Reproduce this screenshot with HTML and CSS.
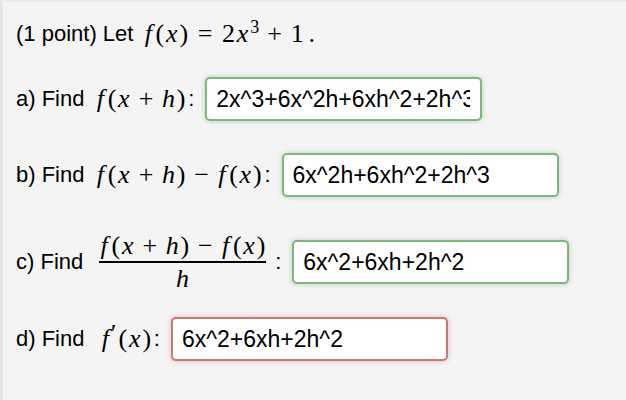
FILE: index.html
```html
<!DOCTYPE html>
<html>
<head>
<meta charset="utf-8">
<link rel="stylesheet" href="styles.css">
</head>
<body>
<div class="page">
  <div class="row r0">
    <span class="label">(1 point) Let</span>
    <span class="math m0"><i class="f">f</i><span class="p">(</span><i class="x">x</i><span class="p">)</span><span class="rel">=</span><span class="n">2</span><i class="x">x</i><sup class="sup">3</sup><span class="bin">+</span><span class="n">1</span><span class="dot">.</span></span>
  </div>
  <div class="row r1">
    <span class="label">a) Find</span>
    <span class="math mi"><i class="f">f</i><span class="p">(</span><i class="x">x</i><span class="bin">+</span><i class="h">h</i><span class="p">)</span></span><span class="colon">:</span>
    <input class="ans ok" type="text" value="2x^3+6x^2h+6xh^2+2h^3" readonly>
  </div>
  <div class="row r2">
    <span class="label">b) Find</span>
    <span class="math mi"><i class="f">f</i><span class="p">(</span><i class="x">x</i><span class="bin">+</span><i class="h">h</i><span class="p">)</span><span class="bin">−</span><i class="f">f</i><span class="p">(</span><i class="x">x</i><span class="p">)</span></span><span class="colon">:</span>
    <input class="ans ok" type="text" value="6x^2h+6xh^2+2h^3" readonly>
  </div>
  <div class="row r3">
    <span class="label">c) Find</span>
    <span class="math frac">
      <span class="num"><i class="f">f</i><span class="p">(</span><i class="x">x</i><span class="bin">+</span><i class="h">h</i><span class="p">)</span><span class="bin">−</span><i class="f">f</i><span class="p">(</span><i class="x">x</i><span class="p">)</span></span>
      <span class="den"><i class="h">h</i></span>
    </span><span class="colon">:</span>
    <input class="ans ok" type="text" value="6x^2+6xh+2h^2" readonly>
  </div>
  <div class="row r4">
    <span class="label">d) Find</span>
    <span class="math md"><i class="f">f</i><span class="prime">′</span><span class="p">(</span><i class="x">x</i><span class="p">)</span></span><span class="colon">:</span>
    <input class="ans bad" type="text" value="6x^2+6xh+2h^2" readonly>
  </div>
</div>
</body>
</html>
```

FILE: styles.css
```css
html, body {
  margin: 0;
  padding: 0;
}
body {
  background: #f4f4f4;
  font-family: "Liberation Sans", Arial, Helvetica, sans-serif;
  font-size: 22px;
  color: #000;
}
.page {
  height: 400px;
  box-sizing: border-box;
  border-left: 3px solid #e6e6e6;
  border-top: 2px solid #ebebeb;
  padding-left: 13px;
}
.row {
  display: flex;
  align-items: center;
}
.r0 { height: 64px; }
.r1 { height: 66px; }
.r2 { height: 86px; }
.r3 { height: 88px; }
.r4 { height: 66px; }

.label {
  white-space: pre;
}
.math {
  font-family: "Liberation Serif", "Times New Roman", serif;
  font-size: 26px;
  white-space: nowrap;
  line-height: 1.1;
}
.m0 { margin-left: 10px; }
.mi { margin-left: 11px; }
.md { margin-left: 16px; }
.math i {
  font-style: italic;
}
.f {
  padding-left: 0.05em;
  padding-right: 0.11em;
}
.x {
  padding: 0 0.04em;
}
.h {
  padding: 0 0.04em 0 0.02em;
}
.p {
  padding: 0 0.03em;
}
.bin {
  display: inline-block;
  margin: 0 0.31em;
}
.rel {
  display: inline-block;
  margin: 0 0.34em;
}
.n {
  padding: 0 0.03em;
}
.sup {
  font-size: 18px;
  vertical-align: 0;
  position: relative;
  top: -0.48em;
  padding-left: 1px;
}
.dot {
  padding-left: 0.15em;
}
.prime {
  font-size: 26px;
  position: relative;
  top: -0.18em;
  margin-left: -0.04em;
  padding-right: 0.05em;
}
.colon {
  margin-left: 2px;
}
.frac {
  display: inline-flex;
  flex-direction: column;
  align-items: center;
  margin-left: 16px;
}
.num {
  padding: 0 0 1px 0;
  border-bottom: 2px solid #000;
  height: 33px;
  box-sizing: border-box;
  display: flex;
  align-items: flex-end;
  line-height: 28px;
}
.den {
  height: 31px;
  line-height: 32px;
}
.frac + .colon {
  margin-left: 9px;
}
.ans {
  margin-left: 11px;
  width: 277px;
  height: 44px;
  box-sizing: border-box;
  border: 2px solid #80b580;
  border-radius: 5px;
  background: #fff;
  box-shadow: 0 0 5px rgba(90, 160, 90, 0.45);
  font-family: "Liberation Sans", Arial, Helvetica, sans-serif;
  font-size: 23px;
  color: #000;
  padding: 0 10px 0 9px;
  outline: none;
}
.bad {
  border-color: #c97878;
  box-shadow: 0 0 5px rgba(200, 100, 100, 0.45);
}
```
